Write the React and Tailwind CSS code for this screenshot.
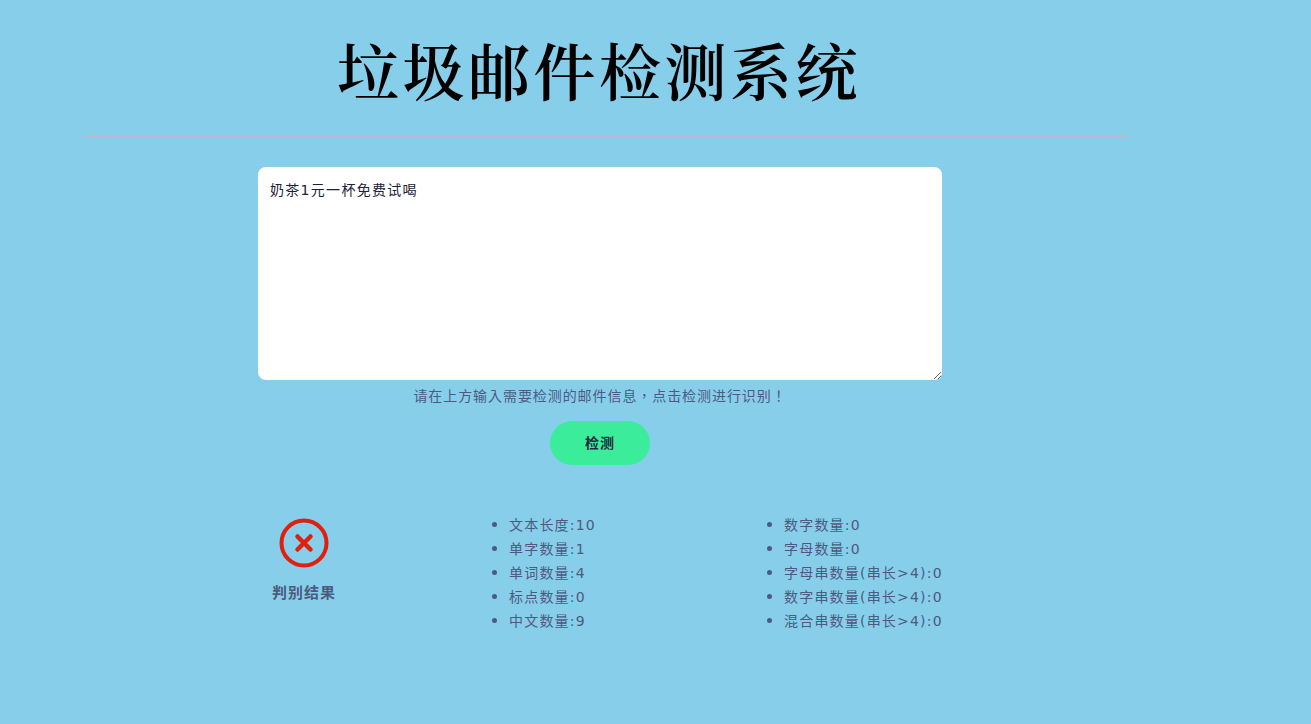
import { useState } from 'react';

const leftStats = [
  ['文本长度', 10],
  ['单字数量', 1],
  ['单词数量', 4],
  ['标点数量', 0],
  ['中文数量', 9],
];

const rightStats = [
  ['数字数量', 0],
  ['字母数量', 0],
  ['字母串数量(串长>4)', 0],
  ['数字串数量(串长>4)', 0],
  ['混合串数量(串长>4)', 0],
];

function StatList({ items, className }) {
  return (
    <ul className={`list-disc marker:text-[16px] ${className}`}>
      {items.map(([label, value]) => (
        <li key={label} className="h-6 leading-6">
          {label}:{value}
        </li>
      ))}
    </ul>
  );
}

export default function App() {
  const [text, setText] = useState('奶茶1元一杯免费试喝');

  return (
    <div className="min-h-[724px] bg-[#87ceeb] pl-[84px] text-[14px] tracking-[1.2px] text-[#4d5a80] font-['DejaVu_Sans','Noto_Sans_CJK_SC',sans-serif]">
      <div className="w-[1044px]">
        {/* Header */}
        <h1 className="h-[137px] border-b border-[#c5b4c9] pt-[32px] pr-[14px] text-center text-[62px] leading-[76px] font-semibold tracking-[3.5px] text-black font-['Noto_Serif_CJK_SC','Liberation_Serif','Noto_Sans_CJK_SC',serif]">
          垃圾邮件检测系统
        </h1>

        {/* Input */}
        <div className="ml-[174px] w-[684px] pt-[30px]">
          <textarea
            value={text}
            onChange={(e) => setText(e.target.value)}
            className="block h-[213px] w-full rounded-lg bg-white px-3 py-[13px] text-[14px] leading-[20px] tracking-[1.3px] text-[#1c2238] outline-none"
          />
          <p className="mt-[6px] text-center leading-5 tracking-[0.93px] font-['DejaVu_Sans','Noto_Sans_CJK_TC','Noto_Sans_CJK_SC',sans-serif]">
            请在上方输入需要检测的邮件信息，点击检测进行识别！
          </p>
          <div className="mt-[15px] flex justify-center">
            <button className="h-11 w-[100px] rounded-full bg-[#3bed9b] text-[14px] font-bold tracking-[1px] text-[#222a40]">
              检测
            </button>
          </div>
        </div>

        {/* Result */}
        <div className="mt-[48px] ml-[174px] flex w-[700px]">
          <div className="flex w-[92px] flex-col items-center pt-[4px]">
            <svg width="52" height="52" viewBox="0 0 52 52" fill="none" stroke="#e0200f" strokeLinecap="round">
              <circle cx="26" cy="26" r="22.5" strokeWidth="4" />
              <path d="M19.5 19.5 32.5 32.5M32.5 19.5 19.5 32.5" strokeWidth="4.5" />
            </svg>
            <span className="mt-[14px] text-[15px] font-bold leading-5 tracking-[1px]">判别结果</span>
          </div>
          <StatList items={leftStats} className="ml-[159px] w-[275px]" />
          <StatList items={rightStats} className="whitespace-nowrap" />
        </div>
      </div>
    </div>
  );
}
